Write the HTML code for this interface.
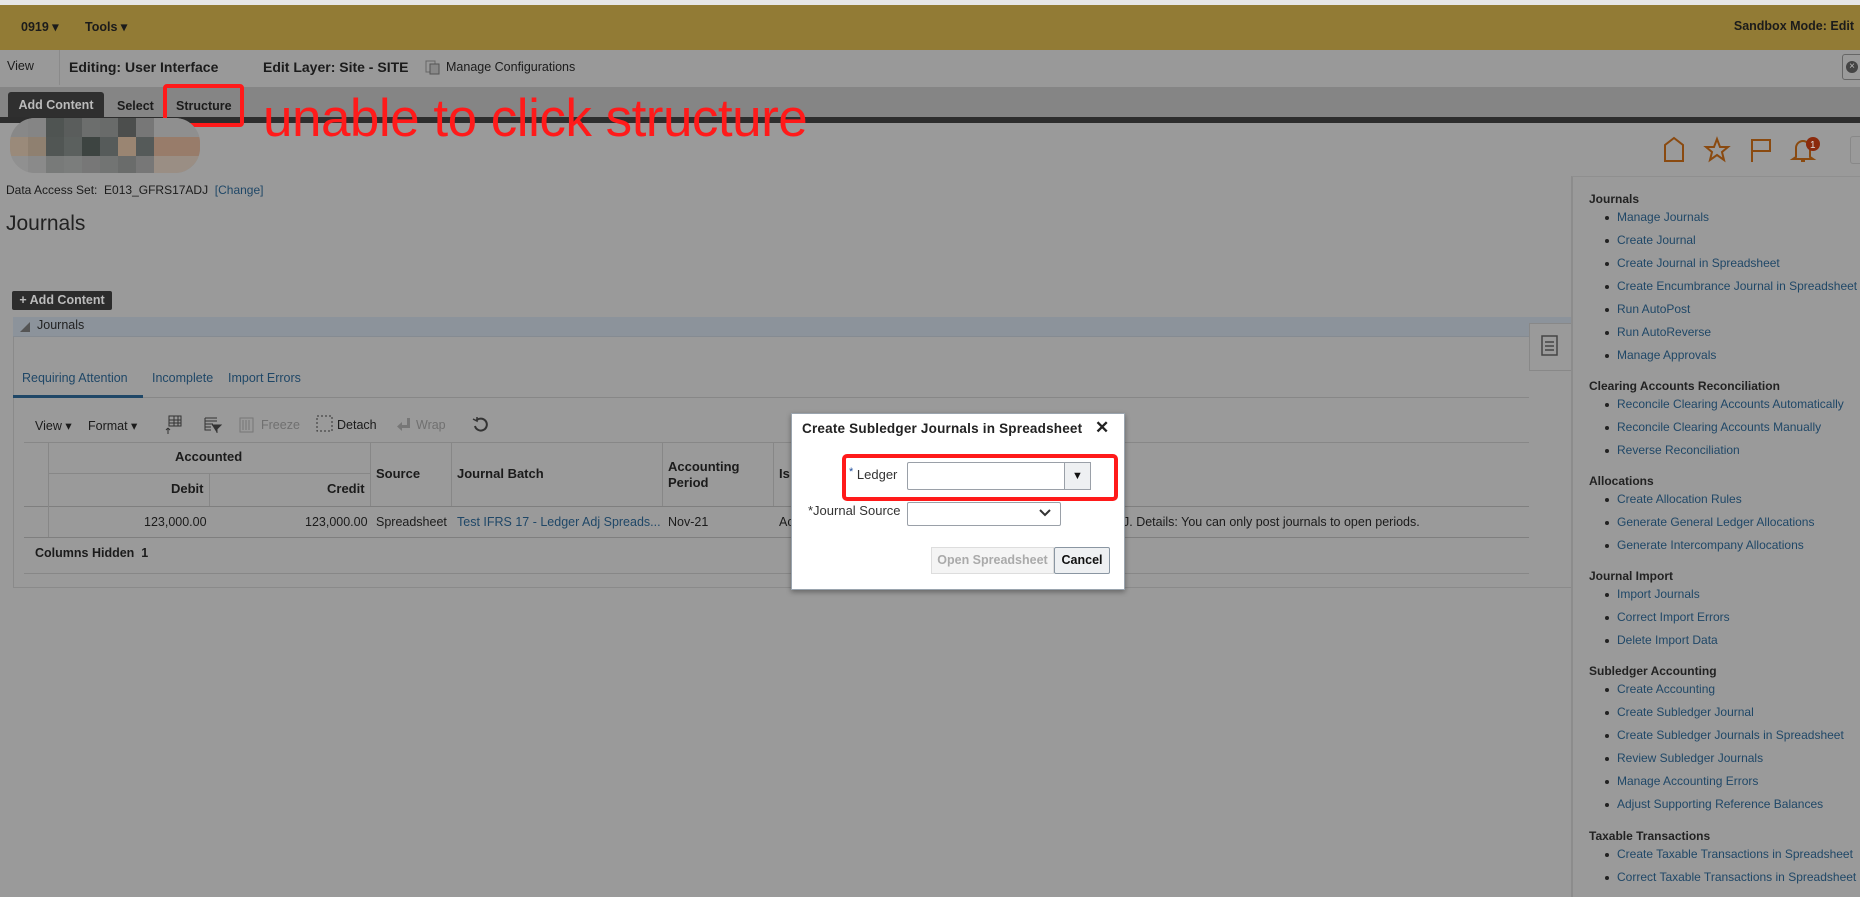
<!DOCTYPE html>
<html><head><meta charset="utf-8"><style>
*{margin:0;padding:0;box-sizing:border-box}
body{width:1860px;height:897px;overflow:hidden;background:#9a9a9a;font-family:"Liberation Sans",Arial,sans-serif;color:#1b1b1b;position:relative;font-size:13px}
.a{position:absolute;white-space:nowrap}
.lk{color:#1f4767}
.b{font-weight:bold}
.side .h{position:absolute;left:1589px;font-weight:bold;font-size:12px;color:#222;white-space:nowrap}
.side .i{position:absolute;left:1617px;font-size:12px;color:#1f4767;white-space:nowrap}
.side .i:before{content:"";position:absolute;left:-12px;top:6px;width:4px;height:4px;border-radius:2px;background:#222}
.hl{position:absolute;height:1px;background:#878787}
.vl{position:absolute;width:1px;background:#878787}
.lg div{position:absolute;width:18px;height:19px}
</style></head><body>
<div class="a" style="left:0;top:0;width:1860px;height:5px;background:#e6e6e6"></div>
<div class="a" style="left:0;top:5px;width:1860px;height:45px;background:#927b35"></div>
<div class="a b" style="left:21px;top:19px;font-size:12.5px">0919 ▾</div>
<div class="a b" style="left:85px;top:19px;font-size:12.5px">Tools ▾</div>
<div class="a b" style="right:6px;top:19px;font-size:12.5px">Sandbox Mode: Edit</div>
<div class="a" style="left:0;top:50px;width:1860px;height:37px;background:#999"></div>
<div class="a" style="left:7px;top:59px;font-size:12.5px">View</div>
<div class="vl" style="left:59px;top:50px;height:35px;background:#8a8a8a"></div>
<div class="a b" style="left:69px;top:59px;font-size:14px">Editing: User Interface</div>
<div class="a b" style="left:263px;top:59px;font-size:14px">Edit Layer: Site - SITE</div>
<svg class="a" style="left:425px;top:59px" width="16" height="16"><rect x="1" y="2" width="9" height="11" fill="none" stroke="#666"/><rect x="5" y="5" width="9" height="10" fill="#888" stroke="#555"/></svg>
<div class="a" style="left:446px;top:60px;font-size:12.5px">Manage Configurations</div>
<div class="a" style="left:1842px;top:54px;width:22px;height:26px;border:1px solid #666;border-radius:3px;background:#9a9a9a"></div>
<div class="a" style="left:1846px;top:61px;width:12px;height:12px;border-radius:6px;background:#444;color:#bbb;font-size:10px;line-height:12px;text-align:center">×</div>
<div class="a" style="left:0;top:87px;width:1860px;height:30px;background:#858585"></div>
<div class="a b" style="left:8px;top:92px;width:96px;height:25px;background:#2f2f2f;color:#bbb;border-radius:3px 3px 0 0;font-size:12.5px;text-align:center;line-height:26px">Add Content</div>
<div class="a b" style="left:117px;top:99px;font-size:12.5px">Select</div>
<div class="a b" style="left:176px;top:99px;font-size:12.5px">Structure</div>
<div class="a" style="left:0;top:117px;width:1860px;height:6px;background:#2d2d2d"></div>
<div class="a" style="left:163px;top:84px;width:81px;height:43px;border:4px solid #ff1a1a;border-radius:4px"></div>
<div class="a" style="left:263px;top:92px;font-size:53px;line-height:1;color:#ff1a1a;font-family:'Liberation Sans','Noto Sans CJK SC',sans-serif;letter-spacing:-0.5px">unable to click structure</div>
<div class="a lg" style="left:10px;top:118px;width:190px;height:55px;border-radius:25px;overflow:hidden;background:#8e8e8e">
<div style="left:0;top:0;background:#888"></div><div style="left:18px;top:0;background:#858585"></div><div style="left:36px;top:0;background:#4f5452"></div><div style="left:54px;top:0;background:#5a5d5c"></div><div style="left:72px;top:0;background:#6c6e6d"></div><div style="left:90px;top:0;background:#696b6a"></div><div style="left:108px;top:0;background:#4c4e4d"></div><div style="left:126px;top:0;background:#777"></div><div style="left:144px;top:0;width:46px;background:#8f8f8f"></div>
<div style="left:0;top:19px;background:#9a8a7a"></div><div style="left:18px;top:19px;background:#8f8070"></div><div style="left:36px;top:19px;background:#515654"></div><div style="left:54px;top:19px;background:#5b605e"></div><div style="left:72px;top:19px;background:#3d4441"></div><div style="left:90px;top:19px;background:#565b5a"></div><div style="left:108px;top:19px;background:#9a8572"></div><div style="left:126px;top:19px;background:#555a59"></div><div style="left:144px;top:19px;width:46px;background:#987c6a"></div>
<div style="left:0;top:38px;background:#909090"></div><div style="left:18px;top:38px;background:#8a8a8a"></div><div style="left:36px;top:38px;background:#787a79"></div><div style="left:54px;top:38px;background:#7b7d7c"></div><div style="left:72px;top:38px;background:#777"></div><div style="left:90px;top:38px;background:#727473"></div><div style="left:108px;top:38px;background:#6a6c6b"></div><div style="left:126px;top:38px;background:#777"></div><div style="left:144px;top:38px;width:46px;background:#9a8e84"></div>
</div>
<svg class="a" style="left:1660px;top:136px" width="170" height="28" fill="none" stroke="#8a4a10" stroke-width="2">
<path d="M5 25V9L14 2L23 9V25Z"/>
<path d="M57 3L60 11L68 11L62 16L64 24L57 19L50 24L52 16L46 11L54 11Z"/>
<path d="M92 26V4H110V15H92"/>
<path d="M136 21V12A7 7 0 0 1 150 12V21L153 23H133Z M141 25H145"/>
<circle cx="153" cy="8" r="7" fill="#8b2a0c" stroke="none"/>
<text x="150" y="12" fill="#ddd" stroke="none" font-size="10" font-family="Liberation Sans">1</text>
</svg>
<div class="a" style="left:1850px;top:136px;width:14px;height:28px;border:1px solid #888;border-radius:3px"></div>
<div class="a" style="left:6px;top:183px;font-size:12px">Data Access Set: &nbsp;E013_GFRS17ADJ &nbsp;<span class="lk">[Change]</span></div>
<div class="a" style="left:6px;top:212px;font-size:21px;color:#222">Journals</div>
<div class="a b" style="left:12px;top:291px;width:100px;height:19px;background:#2c2c2c;color:#bbb;border-radius:2px;font-size:12.5px;line-height:19px;text-align:center">+ Add Content</div>
<div class="a" style="left:13px;top:317px;width:1560px;height:271px;border:1px solid #8a8a8a;border-top:none"></div>
<div class="a" style="left:13px;top:317px;width:1560px;height:20px;background:#8c939b;border-bottom:1px solid #858b92"></div>
<svg class="a" style="left:20px;top:322px" width="10" height="10"><path d="M0 10L10 0V10Z" fill="#555"/></svg>
<div class="a" style="left:37px;top:318px;font-size:12.5px;color:#222">Journals</div>
<div class="a" style="left:1529px;top:323px;width:44px;height:48px;background:#9a9a9a;border:1px solid #888;border-right:none"></div>
<svg class="a" style="left:1541px;top:335px" width="18" height="22" fill="none" stroke="#444" stroke-width="1.5"><rect x="1" y="1" width="15" height="19"/><path d="M4 7H13M4 11H13M4 15H13"/></svg>
<div class="a lk" style="left:22px;top:371px;font-size:12.5px">Requiring Attention</div>
<div class="a lk" style="left:152px;top:371px;font-size:12.5px">Incomplete</div>
<div class="a lk" style="left:228px;top:371px;font-size:12.5px">Import Errors</div>
<div class="hl" style="left:13px;top:397px;width:1516px"></div>
<div class="a" style="left:13px;top:395px;width:130px;height:3px;background:#1f4767"></div>
<div class="a" style="left:35px;top:418px;font-size:12.5px">View ▾</div>
<div class="a" style="left:88px;top:418px;font-size:12.5px">Format ▾</div>
<svg class="a" style="left:165px;top:415px" width="20" height="20" fill="none" stroke="#333"><rect x="4" y="1" width="12" height="10"/><path d="M4 5H16M4 8H16M9 1V11M13 1V11M3 19V13M3 13L1 15M3 13L5 15"/></svg>
<svg class="a" style="left:203px;top:416px" width="20" height="18" fill="none" stroke="#333"><path d="M2 2H14M2 5H14M2 8H10M2 11H8M2 2V14H8"/><path d="M9 9H18L14 13V17" fill="#333"/></svg>
<svg class="a" style="left:239px;top:417px" width="16" height="16" fill="none" stroke="#777"><rect x="1" y="1" width="13" height="14"/><path d="M4 3V13M7 3V13M10 3V13"/></svg>
<div class="a" style="left:261px;top:418px;font-size:12.5px;color:#707070">Freeze</div>
<svg class="a" style="left:316px;top:415px" width="18" height="18" fill="none" stroke="#333" stroke-dasharray="2 2"><rect x="1" y="1" width="15" height="15"/></svg>
<div class="a" style="left:337px;top:418px;font-size:12.5px">Detach</div>
<svg class="a" style="left:396px;top:417px" width="16" height="16" fill="#777"><path d="M11 1H14V11H6V14L1 9.5L6 5V8H11Z"/></svg>
<div class="a" style="left:416px;top:418px;font-size:12.5px;color:#707070">Wrap</div>
<svg class="a" style="left:472px;top:416px" width="16" height="16" fill="none" stroke="#333" stroke-width="2"><path d="M4 5A6 6 0 1 1 3 10"/><path d="M1 3L5 5L5 1" stroke-width="1.5"/></svg>
<div class="hl" style="left:24px;top:442px;width:1505px"></div>
<div class="hl" style="left:48px;top:473px;width:322px"></div>
<div class="hl" style="left:24px;top:506px;width:1505px;background:#7f7f7f"></div>
<div class="hl" style="left:24px;top:537px;width:1505px;background:#7f7f7f"></div>
<div class="hl" style="left:24px;top:573px;width:1505px"></div>
<div class="vl" style="left:48px;top:442px;height:95px"></div>
<div class="vl" style="left:209px;top:473px;height:33px"></div>
<div class="vl" style="left:370px;top:442px;height:64px"></div>
<div class="vl" style="left:451px;top:442px;height:64px"></div>
<div class="vl" style="left:662px;top:442px;height:64px"></div>
<div class="vl" style="left:773px;top:442px;height:64px"></div>
<div class="a b" style="left:175px;top:449px;font-size:13px">Accounted</div>
<div class="a b" style="left:171px;top:481px;font-size:13px">Debit</div>
<div class="a b" style="left:327px;top:481px;font-size:13px">Credit</div>
<div class="a b" style="left:376px;top:466px;font-size:13px">Source</div>
<div class="a b" style="left:457px;top:466px;font-size:13px">Journal Batch</div>
<div class="a b" style="left:668px;top:459px;font-size:13px;line-height:16px">Accounting<br>Period</div>
<div class="a b" style="left:779px;top:466px;font-size:13px">Is</div>
<div class="a" style="left:144px;top:515px;font-size:12.5px">123,000.00</div>
<div class="a" style="left:305px;top:515px;font-size:12.5px">123,000.00</div>
<div class="a" style="left:376px;top:515px;font-size:12.5px">Spreadsheet</div>
<div class="a lk" style="left:457px;top:515px;font-size:12.5px">Test IFRS 17 - Ledger Adj Spreads...</div>
<div class="a" style="left:668px;top:515px;font-size:12.5px">Nov-21</div>
<div class="a" style="left:779px;top:515px;font-size:12.5px">Ac</div>
<div class="a" style="left:1123px;top:515px;font-size:12.5px">J. Details: You can only post journals to open periods.</div>
<div class="a b" style="left:35px;top:546px;font-size:12.5px">Columns Hidden &nbsp;1</div>
<div class="a" style="left:1571px;top:176px;width:289px;height:721px;border-left:2px solid #8c8c8c;border-top:1px solid #8f8f8f"></div>
<div class="side">
<div class="h" style="top:192px">Journals</div>
<div class="i" style="top:210px">Manage Journals</div>
<div class="i" style="top:233px">Create Journal</div>
<div class="i" style="top:256px">Create Journal in Spreadsheet</div>
<div class="i" style="top:279px">Create Encumbrance Journal in Spreadsheet</div>
<div class="i" style="top:302px">Run AutoPost</div>
<div class="i" style="top:325px">Run AutoReverse</div>
<div class="i" style="top:348px">Manage Approvals</div>
<div class="h" style="top:379px">Clearing Accounts Reconciliation</div>
<div class="i" style="top:397px">Reconcile Clearing Accounts Automatically</div>
<div class="i" style="top:420px">Reconcile Clearing Accounts Manually</div>
<div class="i" style="top:443px">Reverse Reconciliation</div>
<div class="h" style="top:474px">Allocations</div>
<div class="i" style="top:492px">Create Allocation Rules</div>
<div class="i" style="top:515px">Generate General Ledger Allocations</div>
<div class="i" style="top:538px">Generate Intercompany Allocations</div>
<div class="h" style="top:569px">Journal Import</div>
<div class="i" style="top:587px">Import Journals</div>
<div class="i" style="top:610px">Correct Import Errors</div>
<div class="i" style="top:633px">Delete Import Data</div>
<div class="h" style="top:664px">Subledger Accounting</div>
<div class="i" style="top:682px">Create Accounting</div>
<div class="i" style="top:705px">Create Subledger Journal</div>
<div class="i" style="top:728px">Create Subledger Journals in Spreadsheet</div>
<div class="i" style="top:751px">Review Subledger Journals</div>
<div class="i" style="top:774px">Manage Accounting Errors</div>
<div class="i" style="top:797px">Adjust Supporting Reference Balances</div>
<div class="h" style="top:829px">Taxable Transactions</div>
<div class="i" style="top:847px">Create Taxable Transactions in Spreadsheet</div>
<div class="i" style="top:870px">Correct Taxable Transactions in Spreadsheet</div>
</div>
<div class="a" style="left:791px;top:413px;width:334px;height:177px;background:#fff;border:1px solid #9aa4ae;box-shadow:0 2px 5px rgba(0,0,0,.35)"></div>
<div class="a b" style="left:802px;top:421px;font-size:13.5px;color:#222;letter-spacing:0.2px">Create Subledger Journals in Spreadsheet</div>
<div class="a b" style="left:1095px;top:418px;font-size:17px;color:#222">✕</div>
<div class="a" style="left:849px;top:466px;font-size:13px;color:#333"><span style="color:#1f4f9e;vertical-align:4px;font-size:11px">*</span> Ledger</div>
<div class="a" style="left:907px;top:462px;width:184px;height:28px;border:1px solid #9aa0a8;border-radius:2px;background:#fff"></div>
<div class="a" style="left:1064px;top:462px;width:27px;height:28px;border:1px solid #9aa0a8;background:#eef0f2;font-size:11px;text-align:center;line-height:27px;color:#111">▼</div>
<div class="a" style="left:842px;top:454px;width:276px;height:47px;border:4px solid #ff1a1a;border-radius:5px"></div>
<div class="a" style="left:808px;top:503px;font-size:13px;color:#333">*Journal Source</div>
<div class="a" style="left:907px;top:502px;width:154px;height:24px;border:1px solid #9aa0a8;border-radius:2px;background:#fff"></div>
<svg class="a" style="left:1038px;top:508px" width="14" height="10" fill="none" stroke="#333" stroke-width="2"><path d="M2 2L7 7L12 2"/></svg>
<div class="a b" style="left:931px;top:547px;width:123px;height:27px;border:1px solid #ddd;background:#f4f4f4;color:#aaa;font-size:12.5px;text-align:center;line-height:25px">Open Spreadsheet</div>
<div class="a b" style="left:1054px;top:547px;width:56px;height:27px;border:1px solid #8a96a2;border-radius:2px;background:#eef0f2;color:#111;font-size:12.5px;text-align:center;line-height:25px">Cancel</div>
</body></html>
